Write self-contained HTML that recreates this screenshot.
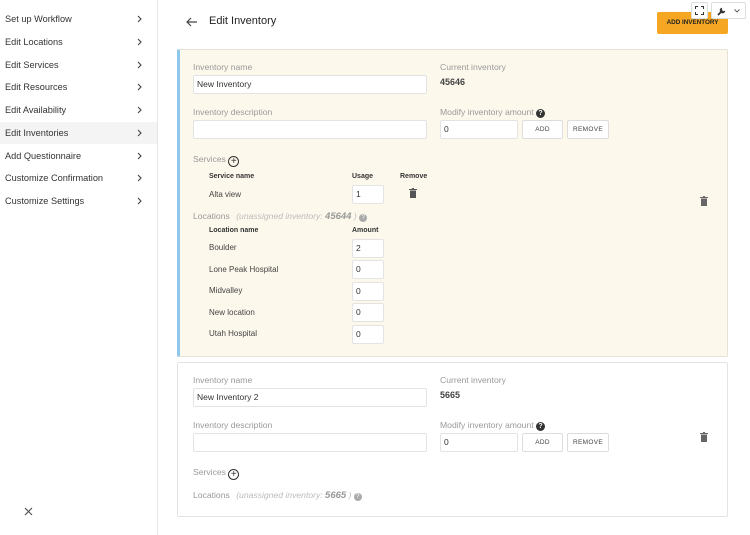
<!DOCTYPE html>
<html><head><style>
*{margin:0;padding:0;box-sizing:border-box}
body{width:750px;height:535px;overflow:hidden;background:#fff;font-family:"Liberation Sans",sans-serif;position:relative;color:#333}
.a{position:absolute;white-space:nowrap}
.side{left:0;top:0;width:158px;height:535px;border-right:1px solid #e6e6e6}
.it{position:absolute;left:0;width:157px;height:22px;font-size:9.2px;color:#333;padding-left:5px;line-height:22px}
.it svg{position:absolute;left:137px;top:7px}
.lbl{font-size:8.6px;color:#999}
.inp{border:1px solid #e3e3e3;background:#fff;border-radius:2px;height:19px;font-size:8.5px;line-height:17px;padding-left:3px;color:#333}
.btn{border:1px solid #ddd;background:#fff;border-radius:2px;height:19px;font-size:6.5px;text-align:center;line-height:17px;color:#444;letter-spacing:.3px}
.th{font-size:7px;font-weight:bold;color:#333}
.tx{font-size:8px;color:#444}
.trash{width:8px;height:10px}
</style></head><body>
<div class="a side">
<div class="it" style="top:8px">Set up Workflow<svg width="5" height="8" viewBox="0 0 5 8"><path d="M1 1l3 3-3 3" stroke="#444" stroke-width="1.1" fill="none"/></svg></div>
<div class="it" style="top:31px">Edit Locations<svg width="5" height="8" viewBox="0 0 5 8"><path d="M1 1l3 3-3 3" stroke="#444" stroke-width="1.1" fill="none"/></svg></div>
<div class="it" style="top:54px">Edit Services<svg width="5" height="8" viewBox="0 0 5 8"><path d="M1 1l3 3-3 3" stroke="#444" stroke-width="1.1" fill="none"/></svg></div>
<div class="it" style="top:76px">Edit Resources<svg width="5" height="8" viewBox="0 0 5 8"><path d="M1 1l3 3-3 3" stroke="#444" stroke-width="1.1" fill="none"/></svg></div>
<div class="it" style="top:99px">Edit Availability<svg width="5" height="8" viewBox="0 0 5 8"><path d="M1 1l3 3-3 3" stroke="#444" stroke-width="1.1" fill="none"/></svg></div>
<div class="it" style="top:122px;background:#f4f4f4">Edit Inventories<svg width="5" height="8" viewBox="0 0 5 8"><path d="M1 1l3 3-3 3" stroke="#444" stroke-width="1.1" fill="none"/></svg></div>
<div class="it" style="top:145px">Add Questionnaire<svg width="5" height="8" viewBox="0 0 5 8"><path d="M1 1l3 3-3 3" stroke="#444" stroke-width="1.1" fill="none"/></svg></div>
<div class="it" style="top:167px">Customize Confirmation<svg width="5" height="8" viewBox="0 0 5 8"><path d="M1 1l3 3-3 3" stroke="#444" stroke-width="1.1" fill="none"/></svg></div>
<div class="it" style="top:190px">Customize Settings<svg width="5" height="8" viewBox="0 0 5 8"><path d="M1 1l3 3-3 3" stroke="#444" stroke-width="1.1" fill="none"/></svg></div>
<svg class="a" style="left:24px;top:507px" width="9" height="9" viewBox="0 0 9 9"><path d="M1 1l7 7M8 1L1 8" stroke="#555" stroke-width="1.2"/></svg>
</div>
<svg class="a" style="left:186px;top:17px" width="12" height="10" viewBox="0 0 12 10"><path d="M11 5H1M5 1L1 5l4 4" stroke="#444" stroke-width="1.2" fill="none"/></svg>
<div class="a" style="left:209px;top:15px;font-size:11px;color:#222">Edit Inventory</div>
<div class="a" style="left:657px;top:12px;width:71px;height:22px;background:#f5a623;border-radius:2px;font-size:6.3px;font-weight:bold;text-align:center;line-height:22px;color:#222">ADD INVENTORY</div>
<div class="a" style="left:691px;top:2px;width:17px;height:17px;background:#fff;border:1px solid #ddd;border-radius:2px"><svg style="position:absolute;left:3px;top:3px" width="9" height="9" viewBox="0 0 9 9"><path d="M0.5 3V0.5H3M6 0.5h2.5V3M8.5 6v2.5H6M3 8.5H0.5V6" stroke="#333" stroke-width="1" fill="none"/></svg></div>
<div class="a" style="left:711px;top:2px;width:35px;height:17px;background:#fff;border:1px solid #ddd;border-radius:2px"><svg style="position:absolute;left:5px;top:3px" width="10" height="10" viewBox="0 0 10 10"><path d="M1 9l4.5-4.5M5 2.5a2 2 0 1 0 2.5 2.5" stroke="#333" stroke-width="1.8" fill="none"/></svg><svg style="position:absolute;left:22px;top:6px" width="6" height="4" viewBox="0 0 6 4"><path d="M0.5 0.5l2.5 2.5 2.5-2.5" stroke="#555" stroke-width="0.9" fill="none"/></svg></div>

<!-- card 1 -->
<div class="a" style="left:177px;top:49px;width:551px;height:308px;background:#fdf8ec;border:1px solid #e6e2d6;border-left:3px solid #90c8ec;border-radius:2px"></div>
<div class="a lbl" style="left:193px;top:62px">Inventory name</div>
<div class="a inp" style="left:193px;top:75px;width:234px">New Inventory</div>
<div class="a lbl" style="left:193px;top:107px">Inventory description</div>
<div class="a inp" style="left:193px;top:120px;width:234px"></div>
<div class="a lbl" style="left:440px;top:62px">Current inventory</div>
<div class="a" style="left:440px;top:77px;font-size:9px;font-weight:bold;color:#444">45646</div>
<div class="a lbl" style="left:440px;top:107px">Modify inventory amount <span style="display:inline-block;width:9px;height:9px;border-radius:50%;background:#333;color:#fff;font-size:7px;text-align:center;line-height:9px;font-weight:bold">?</span></div>
<div class="a inp" style="left:440px;top:120px;width:78px">0</div>
<div class="a btn" style="left:522px;top:120px;width:41px">ADD</div>
<div class="a btn" style="left:567px;top:120px;width:42px">REMOVE</div>
<div class="a lbl" style="left:193px;top:154px">Services <span style="display:inline-block;width:11px;height:11px;border:1px solid #333;border-radius:50%;color:#333;font-size:10px;line-height:9px;text-align:center;vertical-align:-2px">+</span></div>
<div class="a th" style="left:209px;top:173px">Service name</div>
<div class="a th" style="left:352px;top:173px">Usage</div>
<div class="a th" style="left:400px;top:173px">Remove</div>
<div class="a tx" style="left:209px;top:190px">Alta view</div>
<div class="a inp" style="left:352px;top:185px;width:32px">1</div>
<svg class="a trash" style="left:409px;top:188px" viewBox="0 0 8 10"><path d="M0 1h8v1H0zM3 0h2v1H3zM1 2.5h6V10H1z" fill="#555"/></svg>
<svg class="a trash" style="left:700px;top:196px" viewBox="0 0 8 10"><path d="M0 1h8v1H0zM3 0h2v1H3zM1 2.5h6V10H1z" fill="#666"/></svg>
<div class="a lbl" style="left:193px;top:211px">Locations <i style="margin-left:4px;color:#bbb">(unassigned inventory: <b style="font-size:9.5px;color:#999">45644</b> )</i> <span style="display:inline-block;width:8px;height:8px;border-radius:50%;background:#aaa;color:#fff;font-size:6px;text-align:center;line-height:8px">?</span></div>
<div class="a th" style="left:209px;top:227px">Location name</div>
<div class="a th" style="left:352px;top:227px">Amount</div>
<div class="a tx" style="left:209px;top:243px">Boulder</div>
<div class="a inp" style="left:352px;top:239px;width:32px">2</div>
<div class="a tx" style="left:209px;top:265px">Lone Peak Hospital</div>
<div class="a inp" style="left:352px;top:260px;width:32px">0</div>
<div class="a tx" style="left:209px;top:286px">Midvalley</div>
<div class="a inp" style="left:352px;top:282px;width:32px">0</div>
<div class="a tx" style="left:209px;top:308px">New location</div>
<div class="a inp" style="left:352px;top:303px;width:32px">0</div>
<div class="a tx" style="left:209px;top:329px">Utah Hospital</div>
<div class="a inp" style="left:352px;top:325px;width:32px">0</div>

<!-- card 2 -->
<div class="a" style="left:177px;top:362px;width:551px;height:155px;background:#fff;border:1px solid #e3e3e3;border-radius:2px"></div>
<div class="a lbl" style="left:193px;top:375px">Inventory name</div>
<div class="a inp" style="left:193px;top:388px;width:234px">New Inventory 2</div>
<div class="a lbl" style="left:193px;top:420px">Inventory description</div>
<div class="a inp" style="left:193px;top:433px;width:234px"></div>
<div class="a lbl" style="left:440px;top:375px">Current inventory</div>
<div class="a" style="left:440px;top:390px;font-size:9px;font-weight:bold;color:#444">5665</div>
<div class="a lbl" style="left:440px;top:420px">Modify inventory amount <span style="display:inline-block;width:9px;height:9px;border-radius:50%;background:#333;color:#fff;font-size:7px;text-align:center;line-height:9px;font-weight:bold">?</span></div>
<div class="a inp" style="left:440px;top:433px;width:78px">0</div>
<div class="a btn" style="left:522px;top:433px;width:41px">ADD</div>
<div class="a btn" style="left:567px;top:433px;width:42px">REMOVE</div>
<svg class="a trash" style="left:700px;top:432px" viewBox="0 0 8 10"><path d="M0 1h8v1H0zM3 0h2v1H3zM1 2.5h6V10H1z" fill="#666"/></svg>
<div class="a lbl" style="left:193px;top:467px">Services <span style="display:inline-block;width:11px;height:11px;border:1px solid #333;border-radius:50%;color:#333;font-size:10px;line-height:9px;text-align:center;vertical-align:-2px">+</span></div>
<div class="a lbl" style="left:193px;top:490px">Locations <i style="margin-left:4px;color:#bbb">(unassigned inventory: <b style="font-size:9.5px;color:#999">5665</b> )</i> <span style="display:inline-block;width:8px;height:8px;border-radius:50%;background:#aaa;color:#fff;font-size:6px;text-align:center;line-height:8px">?</span></div>
</body></html>
